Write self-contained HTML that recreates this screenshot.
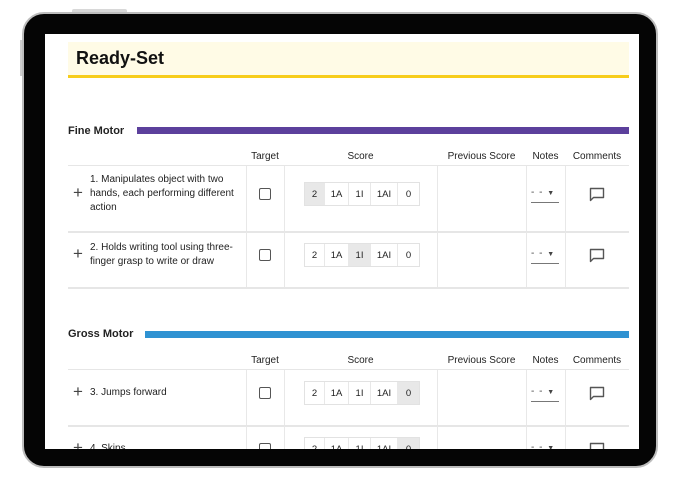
<!DOCTYPE html>
<html><head><style>
*{margin:0;padding:0;box-sizing:border-box}
body{width:680px;height:480px;background:#fff;position:relative;overflow:hidden;font-family:"Liberation Sans",Arial,sans-serif;color:#222}
.frame{position:absolute;left:22px;top:12px;width:636px;height:456px;border-radius:22px;background:#050505;border:2px solid #bdbdbd}
.screen{position:absolute;left:45px;top:34px;width:594px;height:415px;background:#fff;overflow:hidden}
.a{position:absolute}
.hd{font-size:10px;color:#222;text-align:center}
.hl{height:1px;background:#e6e6e6}
.rl{height:2px;background:#e6e6e6}
.vl{width:1px;background:#e8e8e8}
.cb{width:12px;height:12px;border:1.5px solid #555;border-radius:2px}
.sc{display:flex;border:1px solid #e2e2e2;height:24px}
.sc div{font-size:9.5px;display:flex;align-items:center;justify-content:center;border-right:1px solid #e8e8e8}
.sc div:last-child{border-right:none}
.sel{background:#e8e8e8}
.nt{font-size:10px;color:#444;width:28px;border-bottom:1px solid #777;height:16px;letter-spacing:1px}
.txt{font-size:10px;line-height:14px}
.plus{font-size:17px;color:#444;font-weight:300}
#t{position:absolute;left:0;top:0;width:680px;height:449px;overflow:hidden}
</style></head><body>
<div class="a" style="left:72px;top:9px;width:55px;height:5px;background:#d8d8d8;border-radius:2px"></div>
<div class="a" style="left:20px;top:40px;width:3px;height:36px;background:#cfcfcf"></div>
<div class="frame"></div>
<div class="screen">
<div class="a" style="left:23px;top:8px;width:561px;height:34px;background:#fffbe6"></div>
<div class="a" style="left:23px;top:41px;width:561px;height:3px;background:#f7cd1b"></div>
<div class="a" style="left:31px;top:14px;font-size:18px;font-weight:bold;color:#111">Ready-Set</div>

<div class="a" style="left:23px;top:91px;font-size:11px;font-weight:bold">Fine Motor</div>
<div class="a" style="left:92px;top:93px;width:492px;height:7px;background:#5c409c"></div>

<div class="a" style="left:23px;top:294px;font-size:11px;font-weight:bold">Gross Motor</div>
<div class="a" style="left:100px;top:297px;width:484px;height:7px;background:#2f92d2"></div>
</div>
<div id="t"></div>
<script>
function table(y0,rows){
let h='';
const Y=y0;
const hdr=[['Target',246,284],['Score',284,437],['Previous Score',437,526],['Notes',526,565],['Comments',565,629]];
hdr.forEach(c=>{h+=`<div class="a hd" style="left:${c[1]}px;width:${c[2]-c[1]}px;top:${Y-7}px">${c[0]}</div>`});
h+=`<div class="a hl" style="left:68px;width:561px;top:${Y+7}px"></div>`;
let y=Y+8;
rows.forEach(r=>{
 const hgt=r.h;
 [246,284,437,526,565].forEach(x=>{h+=`<div class="a vl" style="left:${x}px;top:${y}px;height:${hgt}px"></div>`});
 const my=y+r.o;
 h+=`<div class="a plus" style="left:73px;top:${my-11}px">+</div>`;
 h+=`<div class="a txt" style="left:90px;top:${my-r.lines*7}px;width:150px">${r.t}</div>`;
 h+=`<div class="a cb" style="left:259px;top:${my-6}px"></div>`;
 let s=`<div class="a sc" style="left:304px;top:${my-12}px">`;
 [['2',20],['1A',24],['1I',22],['1AI',27],['0',21]].forEach((c,i)=>{s+=`<div style="width:${c[1]}px" class="${i==r.sel?'sel':''}">${c[0]}</div>`});
 h+=s+'</div>';
 h+=`<div class="a nt" style="left:531px;top:${my-7}px">- - <span style="font-size:7px">▼</span></div>`;
 h+=`<svg class="a" style="left:589px;top:${my-7}px" width="16" height="15" viewBox="0 0 16 15"><path d="M1.5 1.5h13v9h-10l-3 3z" fill="none" stroke="#555" stroke-width="1.4" stroke-linejoin="round"/></svg>`;
 y+=hgt;
 h+=`<div class="a rl" style="left:68px;width:561px;top:${y-1}px"></div>`;
});
return h;
}
document.getElementById('t').innerHTML=
table(158,[{h:66,o:28,lines:3,t:'1. Manipulates object with two hands, each performing different action',sel:0},{h:56,o:23,lines:2,t:'2. Holds writing tool using three-finger grasp to write or draw',sel:2}])+
table(362,[{h:56,o:23,lines:1,t:'3. Jumps forward',sel:4},{h:56,o:23,lines:1,t:'4. Skips',sel:4}]);
</script>
</body></html>
